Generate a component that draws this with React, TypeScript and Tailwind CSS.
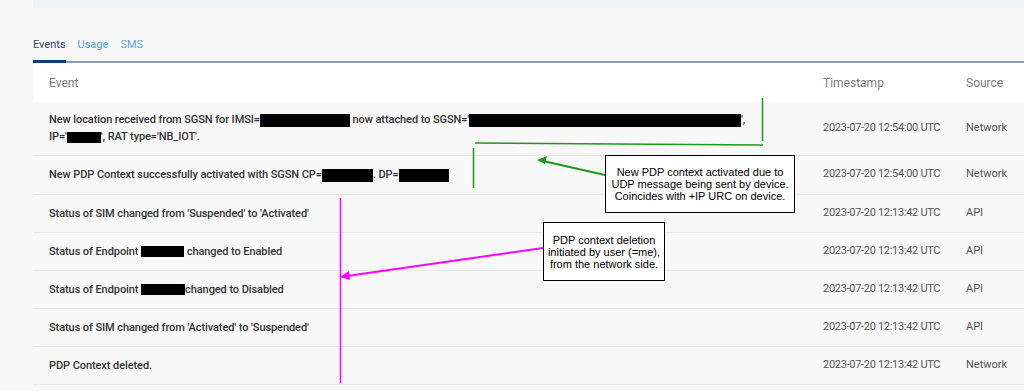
import React from "react";

type Row = { event: React.ReactNode; ts: string; source: string; tall?: boolean };

function Redact({ w, h = 13 }: { w: number; h?: number }) {
  return <span className="inline-block bg-black align-middle" style={{ width: w, height: h }} />;
}

const rows: Row[] = [
  {
    event: (
      <>
        New location received from SGSN for IMSI=<Redact w={90} /> now attached to SGSN='<Redact w={272} />',
        <br />
        IP='<Redact w={34} h={11} />', RAT type='NB_IOT'.
      </>
    ),
    ts: "2023-07-20 12:54:00 UTC",
    source: "Network",
    tall: true,
  },
  {
    event: (
      <>
        New PDP Context successfully activated with SGSN CP=<Redact w={51} />. DP=<Redact w={50} />
      </>
    ),
    ts: "2023-07-20 12:54:00 UTC",
    source: "Network",
  },
  { event: "Status of SIM changed from 'Suspended' to 'Activated'", ts: "2023-07-20 12:13:42 UTC", source: "API" },
  {
    event: (
      <>
        Status of Endpoint <Redact w={43} h={11} /> changed to Enabled
      </>
    ),
    ts: "2023-07-20 12:13:42 UTC",
    source: "API",
  },
  {
    event: (
      <>
        Status of Endpoint <Redact w={44} h={11} />changed to Disabled
      </>
    ),
    ts: "2023-07-20 12:13:42 UTC",
    source: "API",
  },
  { event: "Status of SIM changed from 'Activated' to 'Suspended'", ts: "2023-07-20 12:13:42 UTC", source: "API" },
  { event: "PDP Context deleted.", ts: "2023-07-20 12:13:42 UTC", source: "Network" },
];

export default function App() {
  return (
    <div className="relative h-[391px] w-[1024px] overflow-hidden bg-[#f8f8f8] font-['Roboto',sans-serif]">
      <div className="pl-[33px]">
        <div className="h-2 bg-[#eef6fc]" />

        {/* tabs */}
        <div className="mt-[29px] flex gap-3 text-[11px]">
          <div className="border-b-[3px] border-[#143a74] pb-[6px] text-[#2d4870]">Events</div>
          <div className="pb-[6px] text-[#5aa2e6]">Usage</div>
          <div className="pb-[6px] text-[#5aa2e6]">SMS</div>
        </div>
        <div className="-mt-[2px] h-[2px] bg-[#8c9db6]" />

        {/* table */}
        <div className="grid h-[39px] grid-cols-[774px_143px_1fr] items-center bg-white pt-[2px] text-[12px] text-[#7a7a7a]">
          <div className="px-4">Event</div>
          <div className="px-4">Timestamp</div>
          <div className="px-4">Source</div>
        </div>
        {rows.map((r, i) => (
          <div
            key={i}
            className={`grid grid-cols-[774px_143px_1fr] items-center border-b border-[#e8e8e8] text-[11px] ${r.tall ? "h-[54px]" : i === 1 ? "h-[39px]" : "h-[38px]"}`}
          >
            <div className="px-4 font-medium leading-[17px] tracking-[-0.08px] text-[#333]">{r.event}</div>
            <div className="whitespace-nowrap px-4 tracking-[-0.3px] text-[#555]">{r.ts}</div>
            <div className="whitespace-nowrap px-4 text-[#555]">{r.source}</div>
          </div>
        ))}
      </div>

      {/* annotations */}
      <svg className="pointer-events-none absolute left-0 top-0" width={1024} height={391}>
        <path d="M762.5 98 L762.5 141" stroke="#1a9a1a" strokeWidth="1.5" />
        <path d="M475 143 L763 145" stroke="#1a9a1a" strokeWidth="1.5" />
        <path d="M473.5 148 L473.5 188" stroke="#1a9a1a" strokeWidth="1.5" />
        <path d="M605 175 L543 161" stroke="#1a9a1a" strokeWidth="2" />
        <path d="M537 160 L547 156 L545 164 Z" fill="#1a9a1a" />
        <path d="M340.5 198 L340.5 383" stroke="#ff00ff" strokeWidth="1.5" />
        <path d="M543 248 L347 276" stroke="#ff00ff" strokeWidth="2" />
        <path d="M340 277 L349 271 L350 280 Z" fill="#ff00ff" />
      </svg>

      <div className="absolute left-[605px] top-[155px] flex h-[58px] w-[190px] items-center justify-center border border-black bg-white text-center font-['Liberation_Sans',Arial,sans-serif] text-[11px] leading-[12px] text-black">
        New PDP context activated due to
        <br />
        UDP message being sent by device.
        <br />
        Coincides with +IP URC on device.
      </div>
      <div className="absolute left-[543px] top-[222px] flex h-[59px] w-[122px] items-center justify-center border border-black bg-white text-center font-['Liberation_Sans',Arial,sans-serif] text-[11px] leading-[12px] text-black">
        PDP context deletion
        <br />
        initiated by user (=me),
        <br />
        from the network side.
      </div>
    </div>
  );
}
